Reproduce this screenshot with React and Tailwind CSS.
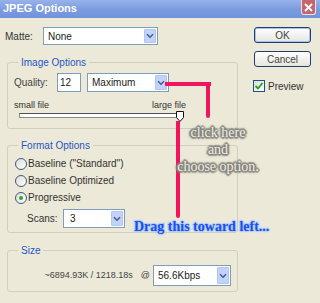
import React from "react";

function Chevron() {
  return (
    <svg width="8" height="6" viewBox="0 0 8 6">
      <path d="M1 1.2 L4 4.2 L7 1.2" fill="none" stroke="#4a5f8c" strokeWidth="1.6" />
    </svg>
  );
}

function Select({ value, className }) {
  return (
    <div className={`flex items-stretch bg-white border border-[#7f9db9] ${className}`}>
      <span className="flex-1 flex items-center pl-[4px] text-[#222]">{value}</span>
      <span className="w-[12px] m-[1px] bg-[#c1d3fb] border border-[#b3c6f0] rounded-[1px] flex items-center justify-center">
        <Chevron />
      </span>
    </div>
  );
}

function Radio({ checked, label }) {
  return (
    <div className="flex items-center h-[17px]">
      <span className="ml-[1px] w-[12px] h-[12px] rounded-full border border-[#3a5a82] bg-linear-to-br from-[#dcdcd6] to-white flex items-center justify-center">
        {checked && <span className="w-[4px] h-[4px] rounded-full bg-[#2fa52f]" />}
      </span>
      <span className="ml-[1px]">{label}</span>
    </div>
  );
}

function Button({ label, def }) {
  return (
    <div
      className={`w-[57px] h-[16px] rounded-[3px] border border-[#1f3f74] bg-linear-to-b from-white to-[#e6e5de] flex items-center justify-center text-[#444] ${
        def ? "shadow-[inset_0_0_0_1px_#a9c1ef]" : ""
      }`}
    >
      {label}
    </div>
  );
}

export default function App() {
  return (
    <div className="relative w-[320px] h-[303px] overflow-hidden bg-[#ece9d8] font-['Liberation_Sans',Arial,sans-serif] text-[10px] text-[#333]">
      {/* title bar */}
      <div className="h-[18px] flex items-start justify-between bg-linear-to-b from-[#97b3ea] via-[#7c9ce0] to-[#7093da] pl-[3px] pr-[4px]">
        <span className="text-white font-bold text-[11px] leading-[17px]">JPEG Options</span>
        <div className="w-[15px] h-[15px] rounded-b-[3px] border border-t-0 border-[#f2dede] bg-[#c4676c] flex items-center justify-center">
          <svg width="9" height="9" viewBox="0 0 9 9">
            <path d="M1 1 L8 8 M8 1 L1 8" stroke="white" strokeWidth="1.8" />
          </svg>
        </div>
      </div>

      <div className="flex">
        {/* left column */}
        <div className="w-[240px] pl-[5px] pt-[9px]">
          <div className="flex items-stretch h-[18px]">
            <span className="w-[38px] flex items-center">Matte:</span>
            <Select value="None" className="w-[115px]" />
          </div>

          <fieldset className="mt-[11px] ml-[2px] w-[231px] border border-[#d0d0bf] rounded-[3px] px-[6px] pb-[10px]">
            <legend className="ml-[4px] px-[3px] leading-[13px] text-[#1f55c8]">Image Options</legend>
            <div className="flex items-stretch h-[19px] mt-[4px]">
              <span className="w-[43px] flex items-center text-[#444]">Quality:</span>
              <div className="w-[24px] bg-white border border-[#7f9db9] flex items-center pl-[2px] text-[#222]">12</div>
              <Select value="Maximum" className="ml-[6px] w-[82px]" />
            </div>
            <div className="mt-[8px] h-[10px] leading-[10px] text-[9px] flex justify-between w-[172px] text-[#333]">
              <span>small file</span>
              <span>large file</span>
            </div>
            <div className="relative mt-[3px] ml-[5px] w-[162px] h-[5px] border border-[#8c8c86] border-t-[#505050] bg-white">
              <svg className="absolute left-[156px] top-[-3px]" width="8" height="11" viewBox="0 0 8 11">
                <path d="M0.5 0.5 H7.5 V6.5 L4 10.5 L0.5 6.5 Z" fill="white" stroke="#111" strokeWidth="1" />
              </svg>
            </div>
          </fieldset>

          <fieldset className="mt-[10px] ml-[2px] w-[231px] border border-[#d0d0bf] rounded-[3px] px-[6px] pt-[3px] pb-[4px]">
            <legend className="ml-[4px] px-[3px] leading-[13px] text-[#1f55c8]">Format Options</legend>
            <Radio label={'Baseline ("Standard")'} />
            <Radio label="Baseline Optimized" />
            <Radio label="Progressive" checked />
            <div className="flex items-stretch h-[19px] mt-[3px]">
              <span className="ml-[13px] w-[36px] flex items-center">Scans:</span>
              <Select value="3" className="w-[62px] pl-[2px]" />
            </div>
          </fieldset>

          <fieldset className="mt-[11px] ml-[2px] w-[231px] border border-[#d0d0bf] rounded-[3px] px-[6px] pt-[8px] pb-[5px]">
            <legend className="ml-[4px] px-[3px] leading-[13px] text-[#1f55c8]">Size</legend>
            <div className="flex items-stretch justify-end h-[21px]">
              <span className="flex items-center text-[9px] text-[#444]">~6894.93K / 1218.18s</span>
              <span className="flex items-center ml-[8px] mr-[3px] text-[9px] text-[#444]">@</span>
              <Select value="56.6Kbps" className="w-[78px]" />
            </div>
          </fieldset>
        </div>

        {/* right column */}
        <div className="pl-[14px] pt-[9px] flex flex-col">
          <Button label="OK" def />
          <div className="mt-[8px]">
            <Button label="Cancel" />
          </div>
          <div className="mt-[13px] -ml-[1px] flex items-center h-[12px]">
            <span className="w-[12px] h-[12px] border border-[#1c5180] bg-linear-to-br from-[#dcdcd6] to-white flex items-center justify-center">
              <svg width="10" height="10" viewBox="0 0 10 10">
                <path d="M1.5 5 L4 7.5 L8.5 2" fill="none" stroke="#21a121" strokeWidth="1.8" />
              </svg>
            </span>
            <span className="ml-[3px] text-[#333]">Preview</span>
          </div>
        </div>
      </div>

      {/* annotations */}
      <div className="absolute left-[165px] top-[82px] w-[46px] h-[4px] bg-[#f2155e]" />
      <div className="absolute left-[206px] top-[82px] w-[4px] h-[36px] rounded-b-full bg-[#f2155e]" />
      <div className="absolute left-[176px] top-[121px] w-[4px] h-[97px] rounded-b-full bg-[#f2155e]" />

      <div className="absolute left-[168px] top-[124px] w-[100px] text-center font-['Liberation_Serif',serif] text-[14px] leading-[17px] text-[#efece4] [text-shadow:2px_0_1px_#85857d,-2px_0_1px_#85857d,0_2px_1px_#85857d,0_-2px_1px_#85857d,1px_1px_1px_#85857d,-1px_-1px_1px_#85857d,1px_-1px_1px_#85857d,-1px_1px_1px_#85857d,0_0_4px_#85857d]">
        <div>click here</div>
        <div>and</div>
        <div>choose option.</div>
      </div>

      <div className="absolute left-[134px] top-[219px] whitespace-nowrap font-['Liberation_Serif',serif] font-bold text-[14px] leading-[16px] text-[#1a4fec] [text-shadow:1px_0_1px_#a6c6ff,-1px_0_1px_#a6c6ff,0_1px_1px_#a6c6ff,0_-1px_1px_#a6c6ff,0_0_3px_#bcd6ff]">
        Drag this toward left...
      </div>
    </div>
  );
}
